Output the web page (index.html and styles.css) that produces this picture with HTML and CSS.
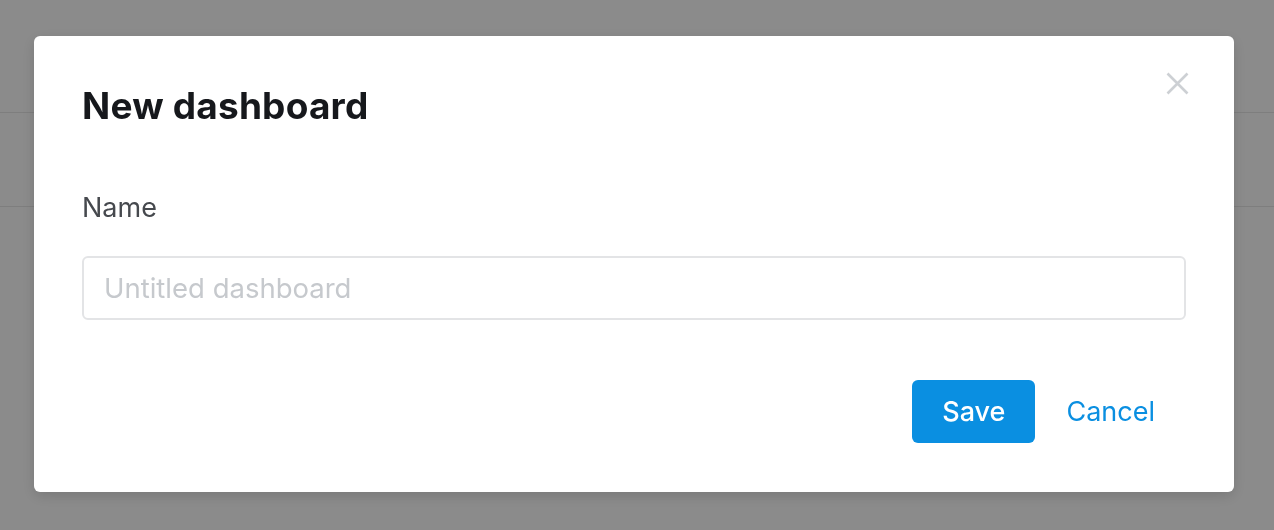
FILE: index.html
```html
<!DOCTYPE html>
<html lang="en">
<head>
<meta charset="utf-8">
<title>New dashboard</title>
<link rel="stylesheet" href="styles.css">
</head>
<body>
<div class="page">
  <div class="topbar"></div>
  <div class="subbar"></div>
</div>
<div class="overlay">
  <div class="modal" role="dialog" aria-labelledby="modal-title">
    <button class="close" aria-label="Close">
      <svg width="23" height="23" viewBox="0 0 23 23" aria-hidden="true">
        <path d="M1.5 1.5 L21.5 21.5 M21.5 1.5 L1.5 21.5" stroke="currentColor" stroke-width="2.6" stroke-linecap="butt" fill="none"/>
      </svg>
    </button>
    <h2 class="modal-title" id="modal-title">New dashboard</h2>
    <form class="form">
      <label class="label" for="name">Name</label>
      <input class="input" id="name" type="text" placeholder="Untitled dashboard">
      <div class="actions">
        <button type="button" class="btn btn-primary">Save</button>
        <button type="button" class="btn btn-link">Cancel</button>
      </div>
    </form>
  </div>
</div>
</body>
</html>
```
FILE: styles.css
```css
* { box-sizing: border-box; }

html, body {
  margin: 0;
  padding: 0;
  height: 100%;
}

body {
  font-family: Inter, "Noto Sans", sans-serif;
  background: #ffffff;
  overflow: hidden;
}

.page {
  height: 100%;
}

.topbar {
  height: 113px;
  border-bottom: 1px solid #e8e8e8;
}

.subbar {
  height: 94px;
  border-bottom: 1px solid #e8e8e8;
}

.overlay {
  position: fixed;
  inset: 0;
  background: rgba(0, 0, 0, 0.455);
  display: flex;
  justify-content: flex-start;
  align-items: flex-start;
  padding: 36px 0 0 34px;
}

.modal {
  position: relative;
  width: 1200px;
  height: 456px;
  background: #ffffff;
  border-radius: 6px;
  box-shadow: 0 4px 14px rgba(0, 0, 0, 0.14);
  padding: 48px 48px 49px;
  display: flex;
  flex-direction: column;
}

.close {
  position: absolute;
  top: 36px;
  right: 45px;
  width: 23px;
  height: 23px;
  padding: 0;
  border: 0;
  background: none;
  color: #cdd0d4;
  cursor: pointer;
}

.close svg { display: block; }

.modal-title {
  margin: 0;
  font-size: 37px;
  line-height: 44px;
  font-weight: 700;
  color: #16181c;
  letter-spacing: 0.2px;
}

.form {
  display: flex;
  flex-direction: column;
  margin-top: 64px;
}

.label {
  font-size: 27px;
  line-height: 32px;
  color: #46494e;
  font-weight: 400;
}

.input {
  margin-top: 32px;
  height: 64px;
  width: 100%;
  border: 2px solid #e3e4e6;
  border-radius: 6px;
  padding: 0 20px;
  font-family: inherit;
  font-size: 27.5px;
  color: #2e3135;
  outline: none;
}

.input::placeholder {
  color: #c6c9cd;
}

.actions {
  display: flex;
  justify-content: flex-end;
  margin-top: 60px;
}

.btn {
  height: 63px;
  padding: 0 30px;
  border: 0;
  border-radius: 6px;
  font-family: inherit;
  font-size: 27px;
  cursor: pointer;
  background: none;
}

.btn-primary {
  background: #0a8fe1;
  color: #ffffff;
  font-weight: 500;
}

.btn-link {
  color: #0a8fe1;
  font-weight: 400;
  padding: 0 31px;
}
```
